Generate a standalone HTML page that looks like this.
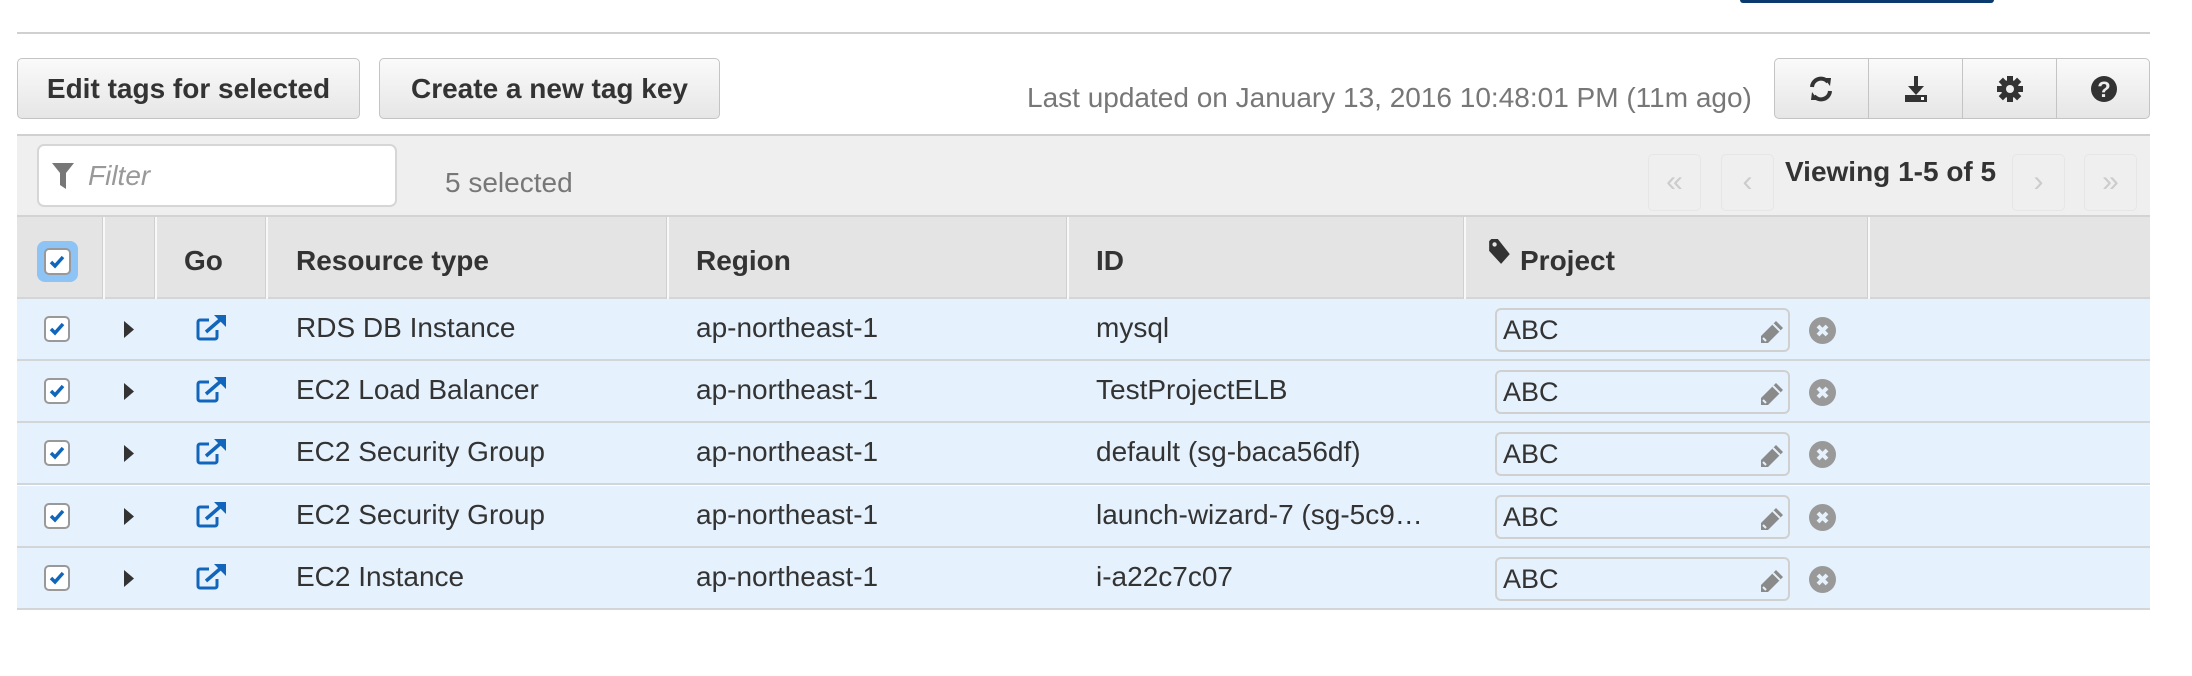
<!DOCTYPE html>
<html><head><style>
body{margin:0;width:2192px;height:676px;background:#fff;font-family:"Liberation Sans",sans-serif;position:relative;overflow:hidden}
.a{position:absolute}
.btn{position:absolute;top:58px;height:61px;border:1px solid #c4c4c4;border-radius:5px;background:linear-gradient(#fafafa,#e6e6e6);box-sizing:border-box;font-weight:bold;font-size:28px;color:#333;text-align:center;line-height:59px}
.ib{position:absolute;top:58px;height:61px;width:94px;border-left:1px solid #c4c4c4;box-sizing:border-box;display:flex;align-items:center;justify-content:center}
.hd{position:absolute;top:220px;height:82px;line-height:82px;font-weight:bold;font-size:28px;color:#333}
.vl{position:absolute;top:217px;height:82px;width:2px;background:#f8f8f8;border-left:1px solid #d0d0d0}
.row{position:absolute;left:17px;width:2133px;height:60px;background:#e5f1fc;border-bottom:2px solid #d3d6d9}
.row span{position:absolute;top:0;line-height:58px;font-size:28px;color:#333}
.cb{position:absolute;width:26px;height:26px;border:2px solid #999;border-radius:5px;background:#fff;box-sizing:border-box}
.inp{position:absolute;left:1478px;top:9px;width:295px;height:44px;border:2px solid #d0d0d0;border-radius:6px;box-sizing:border-box}
.pg{position:absolute;top:154px;width:53px;height:57px;border:1px solid #e6e6e6;border-radius:5px;color:#ccc;font-size:30px;text-align:center;line-height:54px;box-sizing:border-box}
</style></head><body>
<div class="a" style="left:1740px;top:0;width:254px;height:3px;background:#0a3a6e;border-radius:0 0 3px 3px"></div>
<div class="a" style="left:17px;top:32px;width:2133px;height:2px;background:#d0d0d0"></div>
<div class="btn" style="left:17px;width:343px">Edit tags for selected</div>
<div class="btn" style="left:379px;width:341px">Create a new tag key</div>
<div class="a" style="left:1027px;top:80px;font-size:28px;color:#777;line-height:36px">Last updated on January 13, 2016 10:48:01 PM (11m ago)</div>
<div class="btn" style="left:1774px;width:376px;padding:0"></div>
<div class="ib" style="left:1774px;border-left:none"><svg width="30" height="30" viewBox="0 0 30 30"><path d="M6 13a9 9 0 0 1 16-5" stroke="#333" stroke-width="4" fill="none"/><path d="M18 4l7 0-1 8z" fill="#333"/><path d="M24 17a9 9 0 0 1-16 5" stroke="#333" stroke-width="4" fill="none"/><path d="M12 26l-7 0 1-8z" fill="#333"/></svg></div>
<div class="ib" style="left:1868px"><svg width="30" height="30" viewBox="0 0 30 30"><rect x="13" y="2" width="4" height="12" fill="#333"/><path d="M7 12h16l-8 9z" fill="#333"/><rect x="4" y="21" width="22" height="7" fill="#333"/><rect x="20" y="23" width="3" height="3" fill="#fff"/></svg></div>
<div class="ib" style="left:1962px"><svg width="30" height="30" viewBox="0 0 30 30"><g fill="#333" transform="translate(15 15)"><circle r="9"/><rect x="-3" y="-13" width="6" height="26"/><rect x="-3" y="-13" width="6" height="26" transform="rotate(45)"/><rect x="-3" y="-13" width="6" height="26" transform="rotate(90)"/><rect x="-3" y="-13" width="6" height="26" transform="rotate(135)"/></g><circle cx="15" cy="15" r="4" fill="#eee"/></svg></div>
<div class="ib" style="left:2056px"><svg width="30" height="30" viewBox="0 0 30 30"><circle cx="15" cy="15" r="13" fill="#333"/><text x="15" y="23" font-family="Liberation Sans" font-weight="bold" font-size="22" fill="#eee" text-anchor="middle">?</text></svg></div>
<div class="a" style="left:17px;top:134px;width:2133px;height:83px;background:#efefef;border-top:2px solid #d0d0d0;box-sizing:border-box"></div>
<div class="a" style="left:37px;top:144px;width:360px;height:63px;background:#fff;border:2px solid #d6d6d6;border-radius:7px;box-sizing:border-box"></div>
<svg class="a" style="left:52px;top:163px" width="22" height="26" viewBox="0 0 22 26"><path d="M0 0h22l-8 10v16l-6-4V10z" fill="#777"/></svg>
<div class="a" style="left:88px;top:160px;font-size:28px;font-style:italic;color:#999">Filter</div>
<div class="a" style="left:445px;top:167px;font-size:28px;color:#777">5 selected</div>
<div class="pg" style="left:1648px">«</div>
<div class="pg" style="left:1721px">‹</div>
<div class="a" style="left:1785px;top:156px;font-size:28px;font-weight:bold;color:#333">Viewing 1-5 of 5</div>
<div class="pg" style="left:2012px">›</div>
<div class="pg" style="left:2084px">»</div>
<div class="a" style="left:17px;top:215px;width:2133px;height:84px;background:#e4e4e4;border-top:2px solid #d3d3d3;border-bottom:2px solid #d3d6d9;box-sizing:border-box"></div>
<div class="vl" style="left:102px"></div><div class="vl" style="left:154px"></div><div class="vl" style="left:265px"></div><div class="vl" style="left:666px"></div><div class="vl" style="left:1066px"></div><div class="vl" style="left:1463px"></div><div class="vl" style="left:1867px"></div>
<div class="a" style="left:37px;top:241px;width:41px;height:41px;background:#8ec3f5;border-radius:8px"></div>
<div class="cb" style="left:44px;top:248px;width:27px;height:27px"><svg width="23" height="23" viewBox="0 0 23 23"><path d="M5 12l4 4 8-9" stroke="#1166bb" stroke-width="3.5" fill="none"/></svg></div>
<div class="hd" style="left:184px">Go</div>
<div class="hd" style="left:296px">Resource type</div>
<div class="hd" style="left:696px">Region</div>
<div class="hd" style="left:1096px">ID</div>
<svg class="a" style="left:1489px;top:239px" width="22" height="26" viewBox="0 0 20 24"><path d="M0 2v9l11 12 8-9L8 0H2z" fill="#333"/><circle cx="5" cy="5" r="2" fill="#e4e4e4"/></svg>
<div class="hd" style="left:1520px">Project</div>

<div id="rows"></div>
<script>
var d=[["RDS DB Instance","mysql"],["EC2 Load Balancer","TestProjectELB"],["EC2 Security Group","default (sg-baca56df)"],["EC2 Security Group","launch-wizard-7 (sg-5c9…"],["EC2 Instance","i-a22c7c07"]];
var tops=[299,361,423,486,548];
var h="";
d.forEach(function(r,i){var t=tops[i];
h+='<div class="row" style="top:'+t+'px"><div class="cb" style="left:27px;top:17px"><svg width="22" height="22" viewBox="0 0 22 22"><path d="M5 11l4 4 8-9" stroke="#1166bb" stroke-width="3.5" fill="none"/></svg></div>'+
'<svg class="a" style="left:107px;top:22px" width="10" height="17"><path d="M0 0l10 8.5L0 17z" fill="#333"/></svg>'+
'<svg class="a" style="left:179px;top:16px" width="31" height="26" viewBox="0 0 31 26"><path d="M13 5H4a2 2 0 0 0-2 2v15a2 2 0 0 0 2 2h15a2 2 0 0 0 2-2v-7" stroke="#1166bb" stroke-width="3" fill="none"/><path d="M10 17L25 4" stroke="#1166bb" stroke-width="3.5"/><path d="M18 0h12v12z" fill="#1166bb"/></svg>'+
'<span style="left:279px">'+r[0]+'</span><span style="left:679px">ap-northeast-1</span><span style="left:1079px">'+r[1]+'</span>'+
'<div class="inp"><span style="left:6px;top:-2px;line-height:44px;font-size:27px">ABC</span><svg class="a" style="left:260px;top:9px" width="28" height="28" viewBox="0 0 28 28"><path d="M19 2l7 7-15 15H4v-7z" fill="#8a8a8a"/><path d="M16 5l7 7" stroke="#e5f1fc" stroke-width="2"/><path d="M6 19l3 3" stroke="#e5f1fc" stroke-width="2"/></svg></div>'+
'<svg class="a" style="left:1792px;top:18px" width="27" height="27" viewBox="0 0 27 27"><circle cx="13.5" cy="13.5" r="13.5" fill="#999"/><path d="M9 9l9 9M18 9l-9 9" stroke="#e5f1fc" stroke-width="4"/></svg></div>';});
document.getElementById("rows").innerHTML=h;
</script>
</body></html>
